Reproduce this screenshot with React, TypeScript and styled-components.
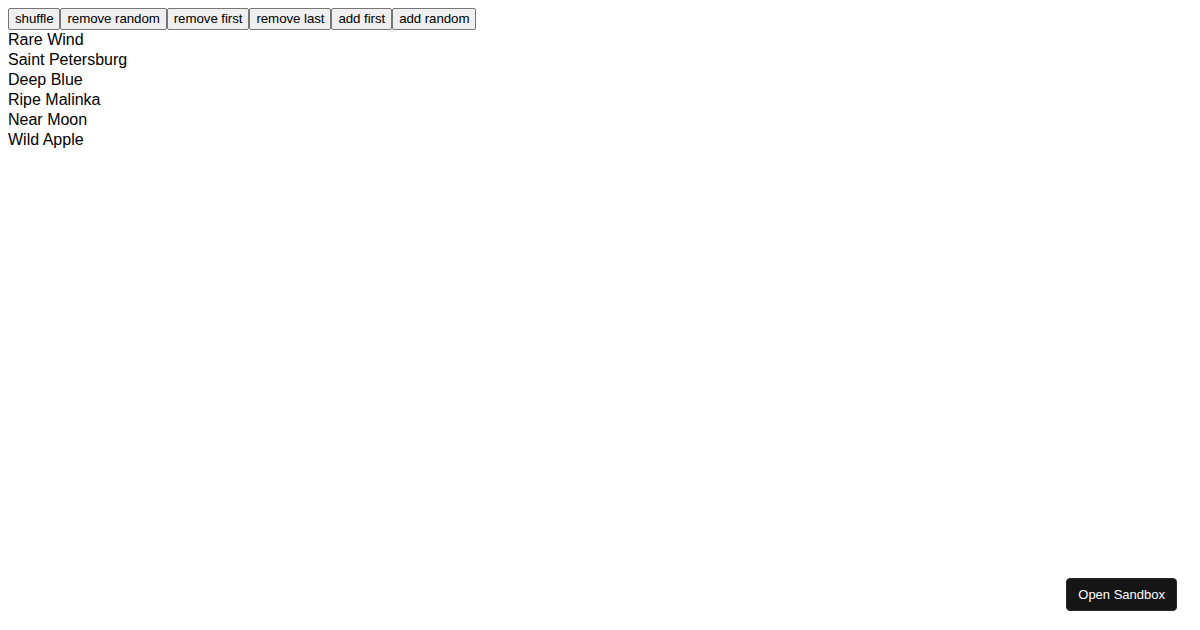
import React, {useState} from 'react';
import styled, {createGlobalStyle} from 'styled-components';

const GlobalStyle = createGlobalStyle`
    body {
        margin: 8px;
        font-family: "Liberation Sans", Arial, sans-serif;
        background: #fff;
        color: #000;
    }
`;

const Toolbar = styled.div`
    display: flex;
`;

const ToolButton = styled.button`
    font-family: "Liberation Sans", Arial, sans-serif;
    font-size: 13.333px;
    letter-spacing: -0.08px;
    line-height: 18px;
    height: 22px;
    padding: 0 6px 1px;
    background: #efefef;
    border: 1px solid #767676;
    border-radius: 2px;
    color: #000;
`;

const List = styled.div`
    font-size: 16px;
    line-height: 20px;
`;

const Item = styled.div`
    height: 20px;
`;

const SandboxButton = styled.button`
    position: fixed;
    right: 23px;
    bottom: 19px;
    height: 33px;
    padding: 0 11px;
    background: #151515;
    color: #fff;
    border: 1px solid #2a2a2a;
    border-radius: 4px;
    font-family: "Liberation Sans", Arial, sans-serif;
    font-size: 13px;
`;

const initial = ['Rare Wind', 'Saint Petersburg', 'Deep Blue', 'Ripe Malinka', 'Near Moon', 'Wild Apple'];
const extra = ['Warm Flame', 'Night Fade', 'Spring Warmth', 'Juicy Peach', 'Young Passion'];

function App() {
    const [items, setItems] = useState(initial);
    const pick = () => extra[Math.floor(Math.random() * extra.length)];
    const shuffle = () => setItems([...items].sort(() => Math.random() - 0.5));
    const removeRandom = () => {
        const i = Math.floor(Math.random() * items.length);
        setItems(items.filter((_, idx) => idx !== i));
    };
    const addRandom = () => {
        const i = Math.floor(Math.random() * (items.length + 1));
        setItems([...items.slice(0, i), pick(), ...items.slice(i)]);
    };
    return (
        <div>
            <GlobalStyle/>
            <Toolbar>
                <ToolButton onClick={shuffle}>shuffle</ToolButton>
                <ToolButton onClick={removeRandom}>remove random</ToolButton>
                <ToolButton onClick={() => setItems(items.slice(1))}>remove first</ToolButton>
                <ToolButton onClick={() => setItems(items.slice(0, -1))}>remove last</ToolButton>
                <ToolButton onClick={() => setItems([pick(), ...items])}>add first</ToolButton>
                <ToolButton onClick={addRandom}>add random</ToolButton>
            </Toolbar>
            <List>
                {items.map((name, i) => <Item key={name + i}>{name}</Item>)}
            </List>
            <SandboxButton>Open Sandbox</SandboxButton>
        </div>
    );
}

export default App;
